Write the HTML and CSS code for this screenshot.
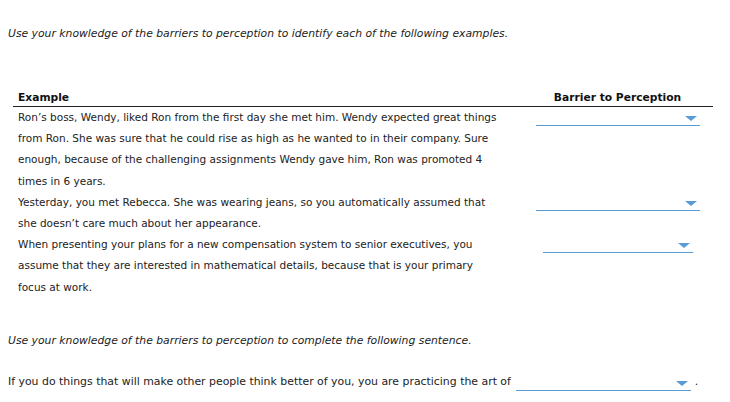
FILE: index.html
```html
<!DOCTYPE html>
<html>
<head>
<meta charset="utf-8">
<link rel="stylesheet" href="styles.css">
</head>
<body>
<div class="page">
  <p class="instr instr-top">Use your knowledge of the barriers to perception to identify each of the following examples.</p>
  <table class="grid">
    <thead>
      <tr>
        <th class="col-ex">Example</th>
        <th class="col-bar">Barrier to Perception</th>
      </tr>
    </thead>
    <tbody>
      <tr>
        <td class="col-ex">Ron’s boss, Wendy, liked Ron from the first day she met him. Wendy expected great things from Ron. She was sure that he could rise as high as he wanted to in their company. Sure enough, because of the challenging assignments Wendy gave him, Ron was promoted 4 times in 6 years.</td>
        <td class="col-bar"><span class="dd dd-wide"><span class="arrow"></span></span></td>
      </tr>
      <tr>
        <td class="col-ex">Yesterday, you met Rebecca. She was wearing jeans, so you automatically assumed that she doesn’t care much about her appearance.</td>
        <td class="col-bar"><span class="dd dd-wide"><span class="arrow"></span></span></td>
      </tr>
      <tr>
        <td class="col-ex">When presenting your plans for a new compensation system to senior executives, you assume that they are interested in mathematical details, because that is your primary focus at work.</td>
        <td class="col-bar"><span class="dd dd-narrow"><span class="arrow"></span></span></td>
      </tr>
    </tbody>
  </table>
  <p class="instr instr-mid">Use your knowledge of the barriers to perception to complete the following sentence.</p>
  <p class="sentence">If you do things that will make other people think better of you, you are practicing the art of <span class="dd dd-inline"><span class="arrow"></span></span> .</p>
</div>
</body>
</html>
```
FILE: styles.css
```css
html, body {
  margin: 0;
  padding: 0;
  background: #fff;
}
body {
  font-family: "DejaVu Sans", Verdana, sans-serif;
  font-size: 10.5px;
  color: #222;
}
.page {
  padding: 0 8px;
}
.instr {
  font-style: italic;
  font-size: 10.8px;
  margin: 0;
  line-height: 14px;
}
.instr-top {
  padding-top: 27px;
}
.grid {
  border-collapse: collapse;
  margin: 47px 0 0 5px;
  width: 700px;
}
.grid th {
  font-weight: bold;
  font-size: 10.7px;
  color: #111;
  height: 18px;
  padding: 0;
  vertical-align: middle;
  border-bottom: 1px solid #222;
}
.grid th.col-ex {
  text-align: left;
  padding-left: 5px;
}
.grid th.col-bar {
  text-align: center;
}
.grid td {
  padding: 0;
  vertical-align: top;
  line-height: 21.2px;
}
.grid td.col-ex {
  padding-left: 5px;
  padding-right: 20px;
  width: 484px;
}
.grid td.col-bar {
  text-align: center;
  padding-top: 1px;
}
.dd {
  display: inline-block;
  position: relative;
  height: 17px;
  border-bottom: 1px solid #5b9bd5;
  vertical-align: top;
}
.dd-wide { width: 164px; }
.dd-narrow { width: 150px; }
.dd-inline {
  width: 175px;
  vertical-align: -6px;
  margin-left: 2px;
}
.arrow {
  position: absolute;
  right: 3px;
  bottom: 4px;
  width: 0;
  height: 0;
  border-left: 6.5px solid transparent;
  border-right: 6.5px solid transparent;
  border-top: 5px solid #5b9bd5;
}
.instr-mid {
  margin-top: 36px;
}
.sentence {
  font-size: 10.9px;
  margin: 25px 0 0 0;
  line-height: 14px;
}
```
